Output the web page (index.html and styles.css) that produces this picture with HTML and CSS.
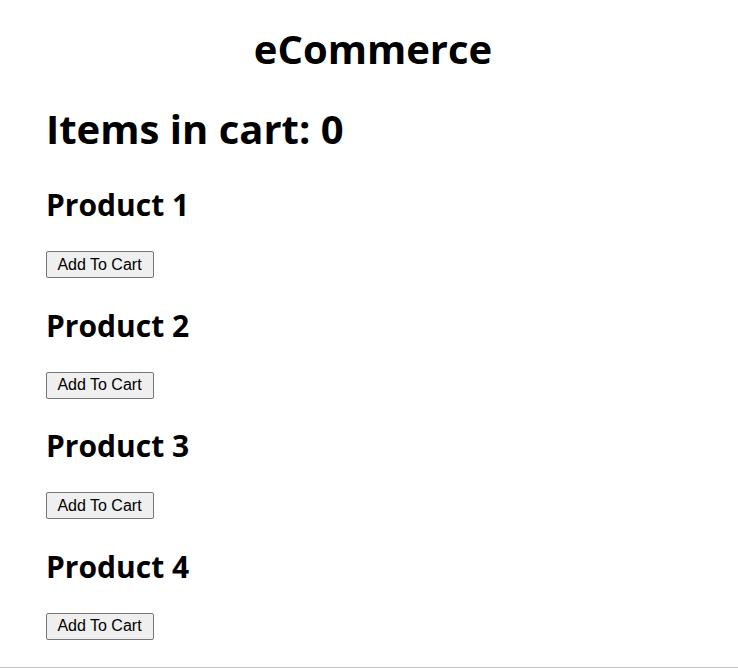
FILE: index.html
```html
<!DOCTYPE html>
<html lang="en">
<head>
<meta charset="utf-8">
<title>eCommerce</title>
<link rel="stylesheet" href="styles.css">
</head>
<body>
<div class="app">
  <h1 class="title">eCommerce</h1>
  <div class="content">
    <h1 class="count">Items in cart: 0</h1>
    <div class="product">
      <h2 class="product-name">Product 1</h2>
      <button class="add-btn">Add To Cart</button>
    </div>
    <div class="product">
      <h2 class="product-name">Product 2</h2>
      <button class="add-btn">Add To Cart</button>
    </div>
    <div class="product">
      <h2 class="product-name">Product 3</h2>
      <button class="add-btn">Add To Cart</button>
    </div>
    <div class="product">
      <h2 class="product-name">Product 4</h2>
      <button class="add-btn">Add To Cart</button>
    </div>
  </div>
  <footer class="footer"></footer>
</div>
</body>
</html>
```
FILE: styles.css
```css
html, body {
  margin: 0;
  padding: 0;
  background: #ffffff;
}

body {
  font-family: "Open Sans", "Liberation Sans", sans-serif;
  color: #000000;
}

.app {
  display: flex;
  flex-direction: column;
}

.title {
  font-size: 40px;
  font-weight: 700;
  text-align: center;
  margin: 21px 0 0;
  padding-left: 8px;
  line-height: normal;
}

.content {
  padding: 0 46px;
}

.count {
  font-size: 40px;
  font-weight: 700;
  margin: 25px 0 0;
  line-height: normal;
}

.product {
  display: flex;
  flex-direction: column;
  align-items: flex-start;
  margin-top: 28px;
}

.product + .product {
  margin-top: 26.6px;
}

.product-name {
  font-size: 30px;
  font-weight: 700;
  margin: 0 0 26px;
  line-height: normal;
}

.add-btn {
  font-family: "Liberation Sans", Arial, sans-serif;
  font-size: 16px;
  color: #000000;
  background: #efefef;
  border: 1px solid #767676;
  border-radius: 2px;
  padding: 3px 11px 3px 10px;
  width: 108px;
  line-height: 18px;
  height: 27px;
  margin: 0;
}

.footer {
  margin-top: 27px;
  border-top: 1px solid #c4c4c4;
  height: 40px;
}
```
